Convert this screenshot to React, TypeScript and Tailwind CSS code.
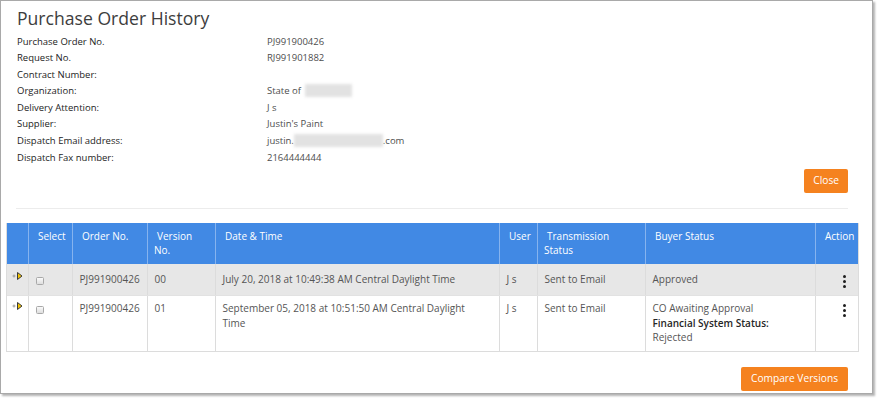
import { Fragment } from "react";

const details = [
  { label: "Purchase Order No.", value: "PJ991900426" },
  { label: "Request No.", value: "RJ991901882" },
  { label: "Contract Number:", value: "" },
  { label: "Organization:", value: "org" },
  { label: "Delivery Attention:", value: "J s" },
  { label: "Supplier:", value: "Justin's Paint" },
  { label: "Dispatch Email address:", value: "email" },
  { label: "Dispatch Fax number:", value: "2164444444" },
];

const Redacted = ({ w }: { w: string }) => (
  <span className={`inline-block ${w} h-[13px] align-[-3px] bg-[#e2e2e2] blur-[1.5px]`} />
);

const ExpandIcon = () => (
  <svg width="11" height="8" viewBox="0 0 11 8" className="block">
    <g stroke="#9a9a9a" strokeWidth="1">
      <line x1="0.5" y1="4" x2="3.5" y2="4" />
      <line x1="2" y1="2.5" x2="2" y2="5.5" />
    </g>
    <polygon points="5.5,0.5 10,4 5.5,7.5" fill="#f3c300" stroke="#3a3a3a" strokeWidth="1" />
  </svg>
);

const Checkbox = () => (
  <div className="w-[8px] h-[8px] mt-[5px] rounded-[1.5px] border border-[#a8a8a8] bg-gradient-to-b from-[#fafafa] to-[#dedede]" />
);

const Kebab = () => (
  <div className="flex flex-col gap-[2px] mt-[3px] ml-[27px]">
    <span className="w-[3px] h-[3px] rounded-full bg-[#1e1e1e]" />
    <span className="w-[3px] h-[3px] rounded-full bg-[#1e1e1e]" />
    <span className="w-[3px] h-[3px] rounded-full bg-[#1e1e1e]" />
  </div>
);

const headers = [
  [""],
  ["Select"],
  ["Order No."],
  ["Version", "No."],
  ["Date & Time"],
  ["User"],
  ["Transmission", "Status"],
  ["Buyer Status"],
  ["Action"],
];

const cols = "grid grid-cols-[22px_44px_75px_68px_284px_38px_108px_170px_42px]";

const App = () => {
  return (
    <div className="w-[878px] h-[399px] bg-white font-['Open_Sans',sans-serif]">
      <div className="w-[873px] h-[394px] border border-[#a9a9a9] shadow-[2px_2px_2px_rgba(0,0,0,0.3)] bg-white">
        {/* Header info */}
        <div className="pl-[15px] pr-[24px]">
          <h1 className="pt-[4.5px] text-[17.6px] leading-[24px] text-[#3d3d3d] pl-[1px]">
            Purchase Order History
          </h1>

          <div className="mt-[4px] grid grid-cols-[250px_1fr] text-[9.5px] leading-[16.6px] pl-[1px]">
            {details.map((d) => (
              <div key={d.label} className="contents">
                <div className="text-[#1c1c1c] font-medium">{d.label}</div>
                <div className="text-[#4d4d4d]">
                  {d.value === "org" ? (
                    <>
                      State of <Redacted w="w-[47px] ml-[2px]" />
                    </>
                  ) : d.value === "email" ? (
                    <>
                      justin.
                      <Redacted w="w-[89px]" />
                      .com
                    </>
                  ) : (
                    d.value
                  )}
                </div>
              </div>
            ))}
          </div>

          <div className="flex justify-end mt-[2.7px]">
            <button className="h-[24px] px-[9px] rounded-[2px] bg-[#f5821f] text-white text-[10.2px]">
              Close
            </button>
          </div>

          <div className="mt-[15px] h-px bg-[#ececec]" />
        </div>

        {/* History table */}
        <div className="pl-[5px] mt-[14px]">
          <div className="w-[853px] border-l border-r border-b border-[#dcdcdc] text-[10px]">
            <div className={`${cols} h-[41px] bg-[#4189e4] text-white font-medium leading-[14px]`}>
              {headers.map((h, i) => (
                <div
                  key={i}
                  className={`pt-[6px] pl-[6px] indent-[3px] ${i < headers.length - 1 ? "border-r border-[#86b3ee]" : ""}`}
                >
                  {h.map((line, j) => (
                    <Fragment key={j}>
                      {j > 0 && <br />}
                      {line}
                    </Fragment>
                  ))}
                </div>
              ))}
            </div>

            {/* Row 1 */}
            <div className={`${cols} h-[31px] bg-[#e7e7e7] text-[#555] leading-[14.5px]`}>
              <div className="pt-[8.5px] pl-[5px] border-r border-[#dcdcdc]"><ExpandIcon /></div>
              <div className="pt-[7.6px] pl-[6.5px] border-r border-[#dcdcdc]"><Checkbox /></div>
              <div className="pt-[7.6px] pl-[6.5px] border-r border-[#dcdcdc]">PJ991900426</div>
              <div className="pt-[7.6px] pl-[6.5px] border-r border-[#dcdcdc]">00</div>
              <div className="pt-[7.6px] pl-[6.5px] border-r border-[#dcdcdc]">July 20, 2018 at 10:49:38 AM Central Daylight Time</div>
              <div className="pt-[7.6px] pl-[6.5px] border-r border-[#dcdcdc]">J s</div>
              <div className="pt-[7.6px] pl-[6.5px] border-r border-[#dcdcdc]">Sent to Email</div>
              <div className="pt-[7.6px] pl-[6.5px] border-r border-[#dcdcdc]">Approved</div>
              <div className="pt-[7.6px]"><Kebab /></div>
            </div>

            {/* Row 2 */}
            <div className={`${cols} h-[56px] bg-white text-[#555] leading-[14.5px] border-t border-[#e2e2e2]`}>
              <div className="pt-[6.5px] pl-[5px] border-r border-[#dcdcdc]"><ExpandIcon /></div>
              <div className="pt-[5.5px] pl-[6.5px] border-r border-[#dcdcdc]"><Checkbox /></div>
              <div className="pt-[5.5px] pl-[6.5px] border-r border-[#dcdcdc]">PJ991900426</div>
              <div className="pt-[5.5px] pl-[6.5px] border-r border-[#dcdcdc]">01</div>
              <div className="pt-[5.5px] pl-[6.5px] border-r border-[#dcdcdc]">
                September 05, 2018 at 10:51:50 AM Central Daylight
                <br />
                Time
              </div>
              <div className="pt-[5.5px] pl-[6.5px] border-r border-[#dcdcdc]">J s</div>
              <div className="pt-[5.5px] pl-[6.5px] border-r border-[#dcdcdc]">Sent to Email</div>
              <div className="pt-[5.5px] pl-[6.5px] border-r border-[#dcdcdc]">
                <div>CO Awaiting Approval</div>
                <div className="font-semibold text-[#262626]">Financial System Status:</div>
                <div>Rejected</div>
              </div>
              <div className="pt-[5.5px]"><Kebab /></div>
            </div>
          </div>
        </div>

        <div className="pr-[24px] mt-[15px] flex justify-end">
          <button className="h-[24px] px-[10px] rounded-[2px] bg-[#f5821f] text-white text-[10.2px]">
            Compare Versions
          </button>
        </div>
      </div>
    </div>
  );
};

export default App;
